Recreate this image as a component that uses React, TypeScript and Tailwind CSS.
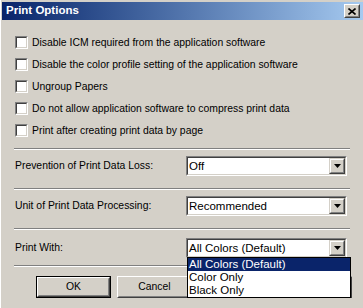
import React from 'react';

const checks = [
  'Disable ICM required from the application software',
  'Disable the color profile setting of the application software',
  'Ungroup Papers',
  'Do not allow application software to compress print data',
  'Print after creating print data by page',
];

const Checkbox: React.FC<{ label: string }> = ({ label }) => (
  <div className="flex items-center h-[13px] gap-[4px]">
    <span className="w-[13px] h-[13px] border border-t-[#808080] border-l-[#808080] border-r-white border-b-white">
      <span className="block w-full h-full bg-white border border-t-[#404040] border-l-[#404040] border-r-[#d4d0c8] border-b-[#d4d0c8]" />
    </span>
    <span className="leading-[13px]">{label}</span>
  </div>
);

const Separator = ({ className = '' }: { className?: string }) => (
  <div className={`ml-[-1px] w-[336px] h-[2px] border-t border-t-[#808080] border-b border-b-white ${className}`} />
);

const Select: React.FC<{ value: string; children?: React.ReactNode }> = ({ value, children }) => (
  <div className="relative w-[161px] h-[20px] text-[11.5px] border border-t-[#808080] border-l-[#808080] border-r-white border-b-white">
    <div className="flex h-full bg-white border border-t-[#404040] border-l-[#404040] border-r-[#d4d0c8] border-b-[#d4d0c8]">
      <span className="flex-1 pl-[1px] leading-[16px]">{value}</span>
      <span className="w-[16px] h-[16px] bg-[#d4d0c8] border border-t-[#d4d0c8] border-l-[#d4d0c8] border-r-[#404040] border-b-[#404040]">
        <span className="flex items-center justify-center w-full h-full border border-t-white border-l-white border-r-[#808080] border-b-[#808080]">
          <svg width="7" height="4" viewBox="0 0 7 4">
            <path d="M0 0h7L3.5 4z" fill="#000" />
          </svg>
        </span>
      </span>
    </div>
    {children}
  </div>
);

const Button: React.FC<{ label?: string; isDefault?: boolean; width?: string }> = ({ label, isDefault, width = 'w-[75px]' }) => (
  <div className={`${width} h-[22px] ${isDefault ? 'border border-black' : ''}`}>
    <div className="h-full border border-t-white border-l-white border-r-[#404040] border-b-[#404040]">
      <div className="h-full flex items-center justify-center border border-t-[#d4d0c8] border-l-[#d4d0c8] border-r-[#808080] border-b-[#808080]">
        {label}
      </div>
    </div>
  </div>
);

export default function App() {
  return (
    <div
      className="relative w-[363px] h-[308px] overflow-hidden bg-[#d4d0c8] text-black text-[10.4px] border-l border-l-white pt-[2px] pl-[1px]"
      style={{ fontFamily: '"Liberation Sans", Arial, sans-serif' }}
    >
      {/* Title bar */}
      <div className="h-[18px] flex items-center justify-between pl-[4px] pr-[3px] bg-gradient-to-r from-[#0a246a] to-[#a6caf0]">
        <span className="text-white font-bold text-[11.5px]">Print Options</span>
        <div className="w-[16px] h-[14px] bg-[#d4d0c8] border border-t-white border-l-white border-r-[#404040] border-b-[#404040]">
          <div className="h-full flex items-center justify-center border border-t-[#d4d0c8] border-l-[#d4d0c8] border-r-[#808080] border-b-[#808080]">
            <svg width="8" height="7" viewBox="0 0 8 7">
              <path d="M0.5 0.5L7.5 6.5M7.5 0.5L0.5 6.5" stroke="#000" strokeWidth="1.6" />
            </svg>
          </div>
        </div>
      </div>

      <div className="pl-[13px]">
        {/* Checkboxes */}
        <div className="mt-[16px] flex flex-col gap-[9px]">
          {checks.map((c) => (
            <Checkbox key={c} label={c} />
          ))}
        </div>

        <Separator className="mt-[11px]" />
        <div className="mt-[6px] flex items-center">
          <span className="w-[171px]">Prevention of Print Data Loss:</span>
          <Select value="Off" />
        </div>

        <Separator className="mt-[12px]" />
        <div className="mt-[6px] flex items-center">
          <span className="w-[171px]">Unit of Print Data Processing:</span>
          <Select value="Recommended" />
        </div>

        <Separator className="mt-[12px]" />
        <div className="relative z-10 mt-[8px] flex items-center">
          <span className="w-[171px]">Print With:</span>
          <Select value="All Colors (Default)">
            <div className="absolute left-0 top-[18px] w-[164px] bg-white border border-black">
              <div className="h-[13px] leading-[13px] pl-[1px] bg-[#0a246a] text-white">All Colors (Default)</div>
              <div className="h-[13px] leading-[13px] pl-[1px]">Color Only</div>
              <div className="h-[13px] leading-[13px] pl-[1px]">Black Only</div>
            </div>
          </Select>
        </div>

        <Separator className="mt-[7px]" />
        <div className="mt-[9px] ml-[21px] flex gap-[6px]">
          <Button label="OK" isDefault />
          <Button label="Cancel" />
          <Button />
          <Button width="w-[73px]" />
        </div>
      </div>
    </div>
  );
}
